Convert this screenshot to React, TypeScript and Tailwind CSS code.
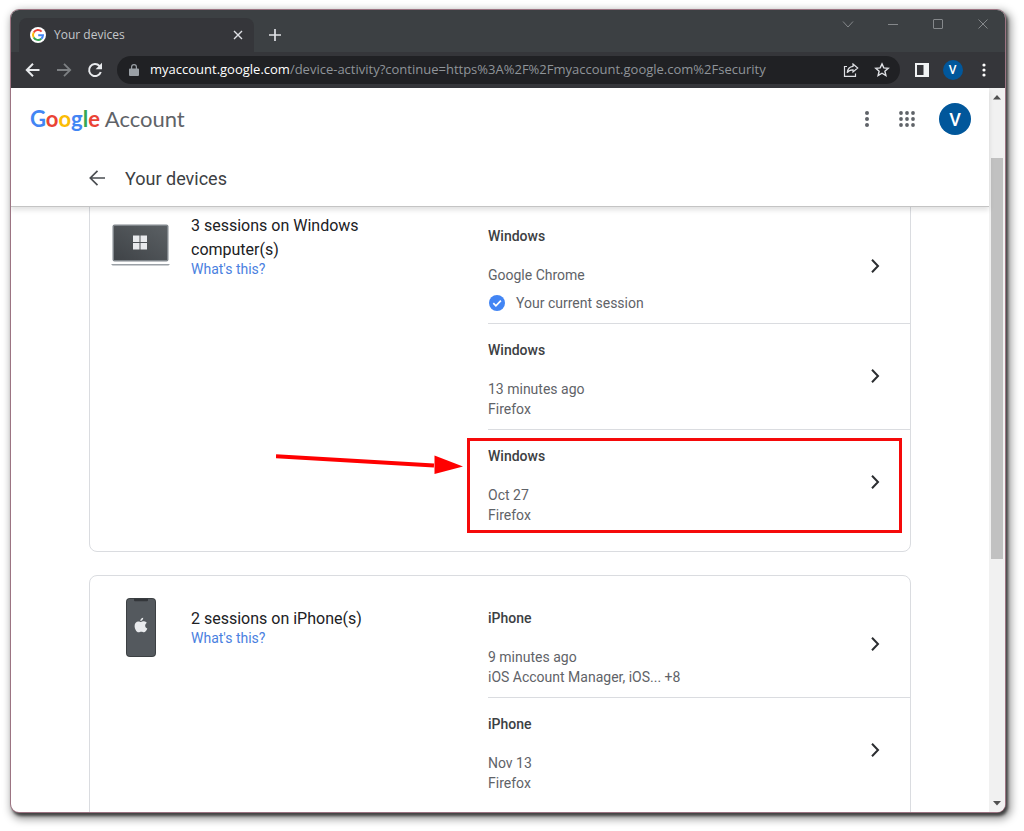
import type { ReactNode } from "react";

type Session = {
  title: string;
  lines: string[];
  current?: boolean;
  highlighted?: boolean;
};

type DeviceGroup = {
  id: string;
  heading: string;
  device: "laptop" | "phone";
  sessions: Session[];
};

const groups: DeviceGroup[] = [
  {
    id: "windows",
    heading: "3 sessions on Windows computer(s)",
    device: "laptop",
    sessions: [
      { title: "Windows", lines: ["Google Chrome"], current: true },
      { title: "Windows", lines: ["13 minutes ago", "Firefox"] },
      { title: "Windows", lines: ["Oct 27", "Firefox"], highlighted: true },
    ],
  },
  {
    id: "iphone",
    heading: "2 sessions on iPhone(s)",
    device: "phone",
    sessions: [
      { title: "iPhone", lines: ["9 minutes ago", "iOS Account Manager, iOS... +8"] },
      { title: "iPhone", lines: ["Nov 13", "Firefox"] },
    ],
  },
];

function GoogleFavicon() {
  return (
    <svg viewBox="0 0 16 16" className="size-4 shrink-0" aria-hidden="true">
      <circle cx="8" cy="8" r="8" fill="#fff" />
      <g fill="none" strokeWidth="2">
        <path d="M11.6 4.6A5 5 0 0 0 3.7 5.5" stroke="#ea4335" />
        <path d="M3.7 5.5a5 5 0 0 0 0 5" stroke="#fbbc05" />
        <path d="M3.7 10.5a5 5 0 0 0 7.6 1.2" stroke="#34a853" />
        <path d="M11.3 11.7A5 5 0 0 0 13 8.2H8.2" stroke="#4285f4" />
      </g>
    </svg>
  );
}

function WindowControls() {
  const controls = [
    { label: "Search tabs", path: "M1 3.5 6 9l5-5.5" },
    { label: "Minimize", path: "M1 6.500h10" },
    { label: "Maximize", path: "M2 1.500h8a.5.5 0 0 1 .5.5v8a.5.5 0 0 1-.5.5H2a.5.5 0 0 1-.5-.5V2a.5.5 0 0 1 .5-.5z" },
    { label: "Close", path: "M1.500 1.500l9 9M10.500 1.500l-9 9" },
  ];
  return (
    <div className="ml-auto flex self-start">
      {controls.map((c) => (
        <button key={c.label} aria-label={c.label} className="flex h-7 w-[45px] items-center justify-center text-[#85888b]">
          <svg viewBox="0 0 12 12" className="size-3" fill="none" stroke="currentColor">
            <path d={c.path} />
          </svg>
        </button>
      ))}
    </div>
  );
}

function ToolbarButton({ label, children }: { label: string; children: ReactNode }) {
  return (
    <button aria-label={label} className="flex h-7 w-[31px] shrink-0 items-center justify-center">
      {children}
    </button>
  );
}

function BrowserChrome() {
  return (
    <div className="font-['Open_Sans',sans-serif] text-[#dfe1e5]">
      <div className="flex h-[42px] items-end bg-[#3c4043]">
        <div className="ml-2 flex h-[34px] w-[235px] items-center rounded-t-lg bg-[#35363a] pr-2 pl-[11px]">
          <GoogleFavicon />
          <span className="ml-2 text-[12px] text-[#c4c7ca]">Your devices</span>
          <button aria-label="Close tab" className="ml-auto flex size-4 items-center justify-center">
            <svg viewBox="0 0 10 10" className="size-2.5" stroke="currentColor" strokeWidth="1.400">
              <path d="M1 1l8 8M9 1l-8 8" />
            </svg>
          </button>
        </div>
        <button aria-label="New tab" className="ml-2 flex h-[34px] w-[26px] items-center justify-center">
          <svg viewBox="0 0 12 12" className="size-3" stroke="currentColor" strokeWidth="1.700">
            <path d="M6 0v12M0 6h12" />
          </svg>
        </button>
        <WindowControls />
      </div>

      <div className="flex h-9 items-center bg-[#35363a] pr-1.5 pl-1.5">
        <ToolbarButton label="Back">
          <svg viewBox="0 0 16 16" className="size-4 text-[#e8eaed]" fill="none" stroke="currentColor" strokeWidth="2">
            <path d="M14.500 8H2M8 1.800 1.800 8 8 14.200" />
          </svg>
        </ToolbarButton>
        <ToolbarButton label="Forward">
          <svg viewBox="0 0 16 16" className="size-4 text-[#7d8083]" fill="none" stroke="currentColor" strokeWidth="1.800">
            <path d="M1 8h13M8 1.800 14.200 8 8 14.200" />
          </svg>
        </ToolbarButton>
        <ToolbarButton label="Reload">
          <svg viewBox="0 0 16 16" className="size-4 text-[#e8eaed]" fill="none" stroke="currentColor" strokeWidth="2">
            <path d="M13.800 10A6 6 0 1 1 12.500 4L14 5.500" />
            <path d="M15 .8v6.400H8.600z" fill="currentColor" stroke="none" />
          </svg>
        </ToolbarButton>
        <div className="mr-1.5 ml-[7px] flex h-7 min-w-0 flex-1 items-center rounded-full bg-[#202124] pr-[3px] pl-3">
          <svg viewBox="0 0 10 12" className="h-3 w-2.5 shrink-0 text-[#9aa0a6]" fill="currentColor">
            <path d="M1 4.500h8a1 1 0 0 1 1 1V11a1 1 0 0 1-1 1H1a1 1 0 0 1-1-1V5.500a1 1 0 0 1 1-1z" />
            <path d="M2.600 5V3a2.400 2.400 0 0 1 4.800 0v2" fill="none" stroke="currentColor" strokeWidth="1.200" />
          </svg>
          <p className="ml-[11px] min-w-0 flex-1 truncate text-[13px] text-[#8f9499]">
            <span className="text-white">myaccount.google.com</span>
            /device-activity?continue=https%3A%2F%2Fmyaccount.google.com%2Fsecurity
          </p>
          <ToolbarButton label="Share this page">
            <svg viewBox="0 0 16 14" className="h-3.5 w-4" fill="none" stroke="currentColor" strokeWidth="1.200">
              <path d="M4 3.500H1.500v9.800H12.500V10.500" />
              <path d="M10 1l4.700 4L10 9V6.800C7.500 6.700 5.500 7.500 4.200 9.700 4.500 6.500 6.500 3.900 10 3.400z" />
            </svg>
          </ToolbarButton>
          <ToolbarButton label="Bookmark this tab">
            <svg viewBox="0 0 16 16" className="size-4" fill="none" stroke="currentColor" strokeWidth="1.400">
              <path d="M8 1.900l1.800 4 4.400.4-3.300 2.900 1 4.300L8 11.200l-3.900 2.300 1-4.300-3.300-2.900 4.400-.4z" />
            </svg>
          </ToolbarButton>
        </div>
        <ToolbarButton label="Side panel">
          <svg viewBox="0 0 14 14" className="size-3.5">
            <path d="M0 0h14v14H0z" fill="#f1f3f4" />
            <path d="M2 2h6.500v10H2z" fill="#35363a" />
          </svg>
        </ToolbarButton>
        <ToolbarButton label="Profile">
          <span className="flex size-5 items-center justify-center rounded-full bg-[#01579b] font-[Roboto,sans-serif] text-[12px] font-medium text-white">V</span>
        </ToolbarButton>
        <ToolbarButton label="Menu">
          <svg viewBox="0 0 4 14" className="h-3.5 w-1" fill="#fff">
            <circle cx="2" cy="2" r="1.600" />
            <circle cx="2" cy="7" r="1.600" />
            <circle cx="2" cy="12" r="1.600" />
          </svg>
        </ToolbarButton>
      </div>
    </div>
  );
}

function PageHeader() {
  return (
    <header className="relative z-10 border-b border-[#c4c4c4] bg-white shadow-[0_3px_5px_rgba(0,0,0,0.12)]">
      <div className="flex h-[62px] items-center pr-[18px] pl-[19px]">
        <a href="#account" className="pb-0.5 font-[Lato,sans-serif] text-[22px] text-[#5f6368]">
          <span className="font-bold">
            <span className="text-[#4285f4]">G</span>
            <span className="text-[#ea4335]">o</span>
            <span className="text-[#fbbc05]">o</span>
            <span className="text-[#4285f4]">g</span>
            <span className="text-[#34a853]">l</span>
            <span className="text-[#ea4335]">e</span>
          </span>{" "}
          Account
        </a>
        <div className="ml-auto flex items-center">
          <button aria-label="More options" className="flex size-10 items-center justify-center">
            <svg viewBox="0 0 4 16" className="h-4 w-1" fill="#5f6368">
              <circle cx="2" cy="2" r="2" />
              <circle cx="2" cy="8" r="2" />
              <circle cx="2" cy="14" r="2" />
            </svg>
          </button>
          <button aria-label="Google apps" className="flex size-10 items-center justify-center">
            <svg viewBox="0 0 16 16" className="size-4" fill="#5f6368">
              {[2, 8, 14].map((y) => [2, 8, 14].map((x) => <circle key={`${x}-${y}`} cx={x} cy={y} r="1.900" />))}
            </svg>
          </button>
          <button aria-label="Account" className="ml-3 flex size-8 items-center justify-center rounded-full bg-[#01579b] font-[Roboto,sans-serif] text-[18px] font-medium text-white">
            V
          </button>
        </div>
      </div>
      <div className="flex h-14 items-center gap-5 px-[78px]">
        <a href="#back" aria-label="Back">
          <svg viewBox="0 0 16 16" className="size-4" fill="none" stroke="#4a4d51" strokeWidth="1.700">
            <path d="M16 8H1.500M8.500 .8 1.300 8l7.200 7.200" />
          </svg>
        </a>
        <h1 className="text-[18px] text-[#3c4043]">Your devices</h1>
      </div>
    </header>
  );
}

function Laptop() {
  return (
    <svg viewBox="0 0 60 42" className="h-[42px] w-[60px]" aria-hidden="true">
      <defs>
        <linearGradient id="laptop-screen" x1="0" y1="1" x2="1" y2="0">
          <stop offset="0" stopColor="#3f4347" />
          <stop offset="1" stopColor="#5b6064" />
        </linearGradient>
      </defs>
      <rect x="1.500" y=".5" width="56" height="37" rx="2" fill="#80868b" />
      <rect x="3" y="2" width="53" height="34" rx=".5" fill="url(#laptop-screen)" />
      <path d="M22 11.500h6.500V18H22zM29.500 11.500H36V18h-6.500zM22 19h6.500v6.500H22zM29.500 19H36v6.500h-6.500z" fill="#e8eaed" />
      <path d="M0 40h59l-1.500 1.500h-56z" fill="#9aa0a6" />
    </svg>
  );
}

function Phone() {
  return (
    <svg viewBox="0 0 30 60" className="h-[60px] w-[30px]" aria-hidden="true">
      <rect width="30" height="59" rx="4" fill="#3c4043" />
      <rect x="1" y="1" width="28" height="57" rx="3" fill="#54595e" />
      <path d="M8 .8h14v1.400a1 1 0 0 1-1 1H9a1 1 0 0 1-1-1z" fill="#33363a" />
      <path d="M17.200 19.800c.1 1.900-1.300 3.100-2.900 3.200-.1-1.700 1.300-3 2.900-3.200z" fill="#e8eaed" />
      <path
        d="M15 24c.8 0 1.600-.8 3-.7 1.200.1 2.200.6 2.800 1.500-2.400 1.500-2 4.800.5 5.800-.7 2-2 3.700-3.300 3.700-1 0-1.500-.6-2.700-.6s-1.700.6-2.700.6c-2 0-4-3.500-4-6.400 0-2.800 1.800-4.500 3.700-4.500 1.200 0 2 .6 2.700.6z"
        fill="#e8eaed"
      />
    </svg>
  );
}

// Red frame and arrow pointing at one session
function Callout() {
  return (
    <>
      <span className="pointer-events-none absolute top-2 right-2 bottom-0.5 -left-[21px] border-3 border-[#f50a0a]" />
      <svg viewBox="0 0 190 24" className="pointer-events-none absolute top-6 -left-[212px] h-6 w-[190px]" aria-hidden="true">
        <path d="M0 2.200 158 11.500" stroke="#ff0000" strokeWidth="4" />
        <path d="M158.500 1.500 187 12.500l-28.500 7.500z" fill="#ff0000" />
      </svg>
    </>
  );
}

function SessionRow({ session }: { session: Session }) {
  return (
    <li className="relative border-b border-[#dadce0] last:border-b-0">
      <a href="#session" className="flex items-center pt-4 pr-[23px] pb-2.5 text-[14px] leading-5 text-[#5f6368]">
        <div className="flex-1">
          <h3 className="mb-[19px] font-medium text-[#3c4043]">{session.title}</h3>
          {session.lines.map((line) => (
            <p key={line}>{line}</p>
          ))}
          {session.current && (
            <p className="mt-2 flex items-center gap-2.5">
              <svg viewBox="0 0 18 18" className="size-[18px]" aria-hidden="true">
                <circle cx="9" cy="9" r="8" fill="#4285f4" />
                <path d="M5.300 9.200l2.600 2.600 5-5.200" fill="none" stroke="#fff" strokeWidth="1.700" />
              </svg>
              Your current session
            </p>
          )}
        </div>
        <svg viewBox="0 0 24 24" className="mb-2 size-6" fill="none" stroke="#2b2d30" strokeWidth="2" aria-hidden="true">
          <path d="M9 5.800 15 12l-6 6.200" />
        </svg>
      </a>
      {session.highlighted && <Callout />}
    </li>
  );
}

function DeviceCard({ group }: { group: DeviceGroup }) {
  return (
    <section className="flex rounded-lg border border-[#dadce0] py-4">
      <div className="flex w-[398px] shrink-0 items-start gap-5">
        <div className={group.device === "laptop" ? "ml-[21px] flex w-[60px] justify-center pt-3.5" : "ml-[21px] flex w-[60px] justify-center pt-1.5"}>
          {group.device === "laptop" ? <Laptop /> : <Phone />}
        </div>
        <div className={group.device === "laptop" ? "w-[200px] pt-1" : "w-[200px] pt-[15px]"}>
          <h2 className="text-[16px] leading-6 text-[#202124]">{group.heading}</h2>
          <a href="#help" className="block text-[14px] leading-[14px] text-[#4a7fe0]">
            What's this?
          </a>
        </div>
      </div>
      <ul className="flex-1">
        {group.sessions.map((session, i) => (
          <SessionRow key={i} session={session} />
        ))}
      </ul>
    </section>
  );
}

function Scrollbar() {
  return (
    <div className="flex w-4 shrink-0 flex-col bg-[#f1f1f1]" aria-hidden="true">
      <svg viewBox="0 0 16 17" className="h-[17px] w-4 shrink-0">
        <path d="M4 11.500h8L8 7z" fill="#505050" />
      </svg>
      <div className="grow-[53]" />
      <div className="mx-0.5 grow-[401] bg-[#c1c1c1]" />
      <div className="grow-[236]" />
      <svg viewBox="0 0 16 17" className="h-[17px] w-4 shrink-0">
        <path d="M4 6h8l-4 4.500z" fill="#505050" />
      </svg>
    </div>
  );
}

export default function App() {
  return (
    <div className="h-screen bg-white pt-2.5 pr-[19px] pb-[19px] pl-[11px]">
      <div className="flex h-full flex-col overflow-hidden rounded-lg bg-white shadow-[0_0_0_1px_#9c7482,2px_3px_3px_1px_rgba(0,0,0,0.6),3px_4px_9px_3px_rgba(0,0,0,0.4)]">
        <BrowserChrome />
        <div className="flex min-h-0 flex-1">
          <div className="flex min-w-0 flex-1 flex-col font-[Roboto,sans-serif]">
            <PageHeader />
            <main className="min-h-0 flex-1 overflow-hidden px-[78px]">
              <div className="-mt-3.5 flex flex-col gap-[23px]">
                {groups.map((group) => (
                  <DeviceCard key={group.id} group={group} />
                ))}
              </div>
            </main>
          </div>
          <Scrollbar />
        </div>
      </div>
    </div>
  );
}
